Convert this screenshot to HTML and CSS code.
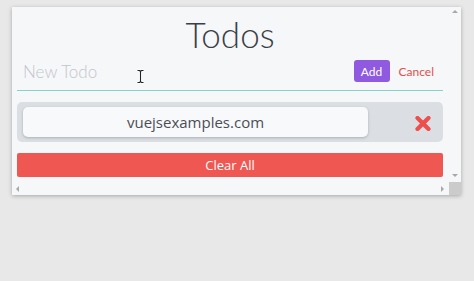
FILE: index.html
```html
<!DOCTYPE html>
<html>
<head>
<meta charset="utf-8">
<link rel="stylesheet" href="styles.css">
</head>
<body>
<div class="window">
  <div class="content">
    <h1 class="title">Todos</h1>
    <div class="input-row">
      <div class="new-todo">New Todo</div>
      <button class="btn-add">Add</button>
      <button class="btn-cancel">Cancel</button>
    </div>
    <ul class="list">
      <li class="list-row">
        <div class="item">vuejsexamples.com</div>
        <div class="remove">
          <svg width="16" height="15" viewBox="0 0 16 15"><path d="M2.5 2 L13.5 13 M13.5 2 L2.5 13" stroke="#ec4f4c" stroke-width="4.2" stroke-linecap="round"/></svg>
        </div>
      </li>
    </ul>
    <button class="btn-clear">Clear All</button>
  </div>
  <div class="vscroll">
    <span class="arrow arrow-up"></span>
    <span class="arrow arrow-down"></span>
  </div>
  <div class="hscroll">
    <span class="arrow arrow-left"></span>
    <span class="arrow arrow-right"></span>
  </div>
  <div class="corner"></div>
</div>
<svg class="cursor" width="9" height="15" viewBox="0 0 9 15">
  <path d="M1.5 1.5 H3.5 L4.5 2.5 L5.5 1.5 H7.5 M4.5 2.5 V12.5 M1.5 13.5 H3.5 L4.5 12.5 L5.5 13.5 H7.5" fill="none" stroke="#ffffff" stroke-width="2.6"/>
  <path d="M1.5 1.5 H3.5 L4.5 2.5 L5.5 1.5 H7.5 M4.5 2.5 V12.5 M1.5 13.5 H3.5 L4.5 12.5 L5.5 13.5 H7.5" fill="none" stroke="#222222" stroke-width="1.1"/>
</svg>
</body>
</html>
```
FILE: styles.css
```css
html, body {
  margin: 0;
  padding: 0;
}
body {
  background: #e8e8e8;
  font-family: Lato, "Open Sans", sans-serif;
  width: 474px;
  height: 281px;
  overflow: hidden;
  position: relative;
}
.window {
  margin: 7px 0 0 12px;
  width: 449px;
  height: 188px;
  background: #f6f7f9;
  box-shadow: 0 1px 4px rgba(0, 0, 0, 0.28);
  display: grid;
  grid-template-columns: 1fr 12px;
  grid-template-rows: 1fr 13px;
}
.content {
  padding: 0 6px 0 5px;
  overflow: hidden;
}
.title {
  margin: 0;
  padding-top: 5px;
  height: 44px;
  line-height: 44px;
  text-align: center;
  font-family: Lato, sans-serif;
  font-weight: 300;
  font-size: 35px;
  color: #3b3f47;
}
.input-row {
  display: flex;
  align-items: center;
  padding: 3px 0 7px;
  border-bottom: 1px solid #86d3ca;
}
.new-todo {
  flex: 1;
  padding-left: 6px;
  padding-top: 2px;
  font-size: 17px;
  font-weight: 300;
  color: #c2c6ca;
  line-height: 22px;
}
.btn-add {
  width: 36px;
  height: 22px;
  border: 0;
  border-radius: 3px;
  background: #8f5ae0;
  color: #ffffff;
  font-family: Lato, sans-serif;
  font-size: 12px;
  padding: 0;
  margin-right: 9px;
}
.btn-cancel {
  border: 0;
  background: transparent;
  color: #e0504c;
  font-family: Lato, sans-serif;
  font-size: 12px;
  padding: 0;
  margin-right: 9px;
}
.list {
  list-style: none;
  margin: 11px 0 0;
  padding: 0;
}
.list-row {
  display: flex;
  align-items: center;
  background: #dbdfe4;
  border-radius: 5px;
  padding: 5px 0 5px 6px;
}
.item {
  width: 345px;
  height: 30px;
  line-height: 30px;
  background: #f8f9fb;
  border-radius: 5px;
  box-shadow: 0 1px 3px rgba(0, 0, 0, 0.22);
  text-align: center;
  font-family: "Open Sans", sans-serif;
  font-size: 15px;
  color: #4a4e56;
}
.remove {
  flex: 1;
  display: flex;
  justify-content: flex-end;
  padding-right: 12px;
  padding-top: 3px;
}
.btn-clear {
  display: block;
  width: 100%;
  height: 24px;
  margin-top: 11px;
  border: 0;
  border-radius: 2px;
  background: #ef5753;
  color: #ffffff;
  font-family: "Open Sans", sans-serif;
  font-size: 13px;
  padding: 0;
}
.vscroll, .hscroll {
  position: relative;
  background: #f6f7f9;
}
.corner {
  background: #cbcbcb;
}
.arrow {
  position: absolute;
  width: 0;
  height: 0;
  border: 3px solid transparent;
}
.arrow-up {
  top: 3px;
  left: 3px;
  border-bottom-color: #a8a8a8;
  border-top-width: 0;
}
.arrow-down {
  bottom: 5px;
  left: 3px;
  border-top-color: #a8a8a8;
  border-bottom-width: 0;
}
.arrow-left {
  left: 4px;
  top: 4px;
  border-right-color: #a8a8a8;
  border-left-width: 0;
}
.arrow-right {
  right: 5px;
  top: 4px;
  border-left-color: #a8a8a8;
  border-right-width: 0;
}
.cursor {
  position: absolute;
  left: 136px;
  top: 69px;
}
```
